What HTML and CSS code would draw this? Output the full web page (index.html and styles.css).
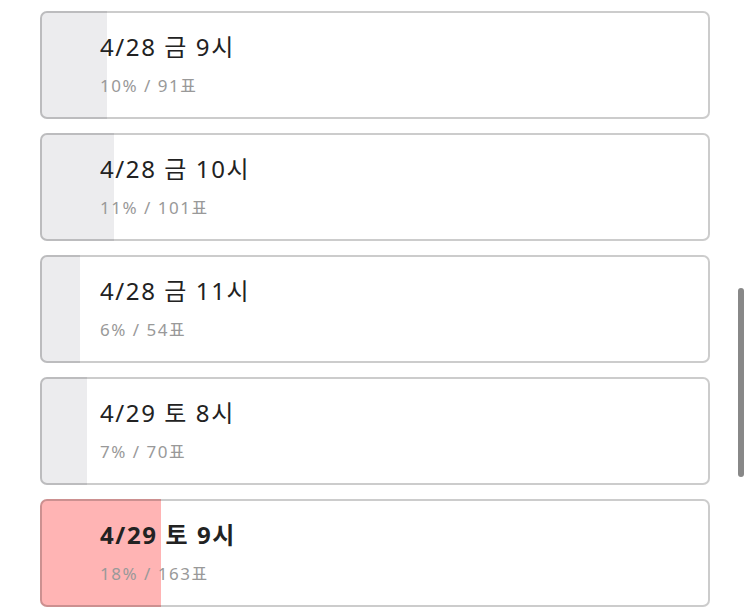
FILE: index.html
```html
<!DOCTYPE html>
<html lang="ko">
<head>
  <meta charset="UTF-8" />
  <title>투표 결과</title>
  <link rel="stylesheet" href="styles.css">
</head>
<body>

<div class="목록">

  <div class="항목" style="--p:10%">
    <div class="제목">4/28 금 9시</div>
    <div class="결과">10% / 91표</div>
  </div>

  <div class="항목" style="--p:11%">
    <div class="제목">4/28 금 10시</div>
    <div class="결과">11% / 101표</div>
  </div>

  <div class="항목" style="--p:6%">
    <div class="제목">4/28 금 11시</div>
    <div class="결과">6% / 54표</div>
  </div>

  <div class="항목" style="--p:7%">
    <div class="제목">4/29 토 8시</div>
    <div class="결과">7% / 70표</div>
  </div>

  <div class="항목 선택" style="--p:18%">
    <div class="제목">4/29 토 9시</div>
    <div class="결과">18% / 163표</div>
  </div>

</div>

<div class="스크롤"></div>

</body>
</html>
```

FILE: styles.css
```css
body {
  background-color: #fff;
  color: #222;
  font-family: "Noto Sans", "Noto Sans CJK KR", sans-serif;
  margin: 0;
  overflow: hidden;
}
.목록 {
  display: flex;
  flex-direction: column;
  gap: 14px;
  padding: 11px 0 0 40px;
}
.항목 {
  --bar: #ececee;
  width: 670px;
  height: 108px;
  box-sizing: border-box;
  border: 2px solid rgba(0, 0, 0, 0.2);
  border-radius: 7px;
  background: linear-gradient(to right, var(--bar) var(--p), #fff var(--p));
  background-origin: border-box;
  display: flex;
  flex-direction: column;
  justify-content: center;
  gap: 12px;
  padding: 0 0 1px 58px;
}
.항목.선택 {
  --bar: #ffb4b4;
}
.제목 {
  font-size: 24px;
  line-height: 30px;
  letter-spacing: 1.6px;
}
.선택 .제목 {
  font-weight: bold;
}
.결과 {
  font-size: 17px;
  line-height: 24px;
  letter-spacing: 1.5px;
  color: #999;
}
.스크롤 {
  position: fixed;
  right: 1px;
  top: 288px;
  width: 6px;
  height: 189px;
  border-radius: 3px;
  background-color: #888;
}
```
